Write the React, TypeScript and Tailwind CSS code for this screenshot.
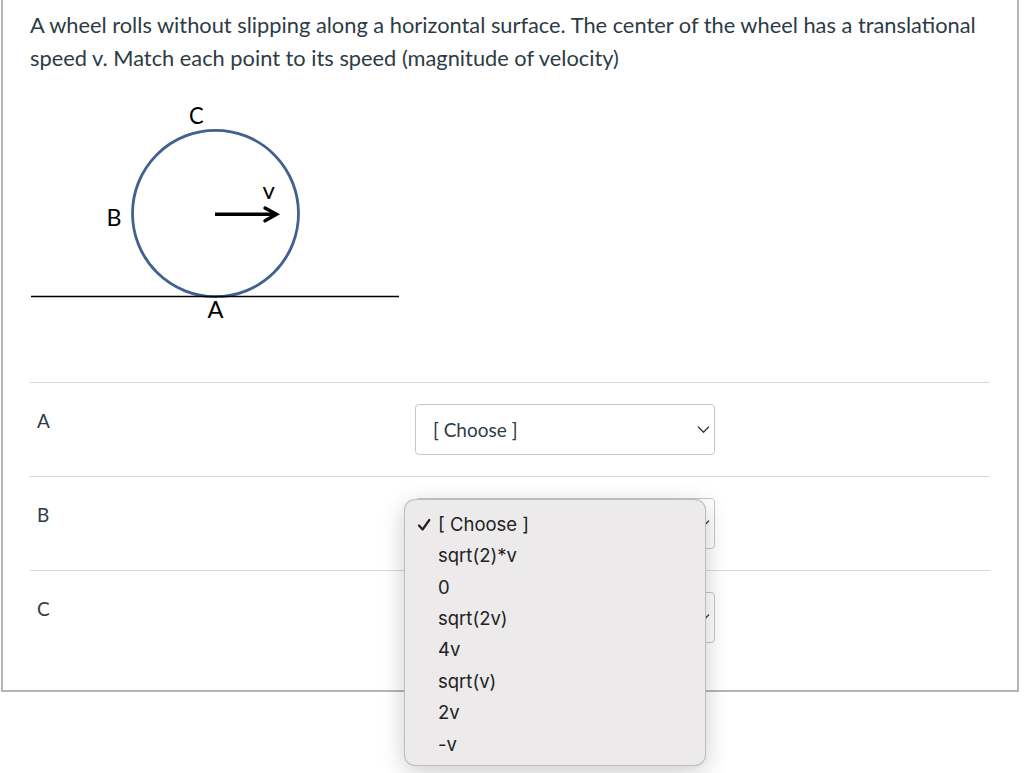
import React, { useState } from 'react';

const OPTIONS = ['[ Choose ]', 'sqrt(2)*v', '0', 'sqrt(2v)', '4v', 'sqrt(v)', '2v', '-v'];
const POINTS = ['A', 'B', 'C'];

function WheelDiagram() {
    return (
        <svg width="370" height="236" viewBox="0 0 370 236" className="block font-['Lato',sans-serif]">
            <ellipse cx="185.5" cy="123.5" rx="83" ry="83.2" fill="none" stroke="#43618f" strokeWidth="2.8" />
            <path d="M1 206.5H369" stroke="#000" strokeWidth="1.3" />
            <path d="M185 124.3H244" stroke="#000" strokeWidth="3.6" />
            <path d="M235 118L246.5 124.3L235 130.8" fill="none" stroke="#000" strokeWidth="3.4" strokeLinecap="round" />
            <g fontSize="24" fill="#000">
                <text x="159" y="34.3" textLength="14.7" lengthAdjust="spacingAndGlyphs">C</text>
                <text x="76.6" y="136" textLength="15" lengthAdjust="spacingAndGlyphs">B</text>
                <text x="177.5" y="228.3" textLength="16" lengthAdjust="spacingAndGlyphs">A</text>
                <text x="232.6" y="109.3" textLength="12.4" lengthAdjust="spacingAndGlyphs">v</text>
            </g>
        </svg>
    );
}

function App() {
    const [openPoint, setOpenPoint] = useState('B');
    const [answers, setAnswers] = useState<Record<string, string>>({});

    const handleSelect = (point: string, option: string) => {
        setAnswers({ ...answers, [point]: option });
        setOpenPoint('');
    };

    const renderMenu = (point: string) => (
        <ul className="absolute -left-[10px] top-[2px] z-10 h-[265px] w-[300px] rounded-[10px] bg-[#eceaeb] pt-[9px] font-['Inter',sans-serif] text-[18.5px] text-[#222] shadow-[0_0_0_1px_#bdbdbd,0_6px_24px_rgba(0,0,0,0.22)]">
            {OPTIONS.map((option) => (
                <li
                    key={option}
                    onClick={() => handleSelect(point, option)}
                    className="flex h-[31.4px] cursor-default items-center pl-[11px]"
                >
                    <span className="w-[22px]">
                        {option === (answers[point] || OPTIONS[0]) && (
                            <svg width="15" height="14" viewBox="0 0 15 14" fill="none" stroke="#222" strokeWidth="2.2" strokeLinecap="round" strokeLinejoin="round">
                                <path d="M3 7.5L6.6 11.5L13.3 2" />
                            </svg>
                        )}
                    </span>
                    {option}
                </li>
            ))}
        </ul>
    );

    return (
        <div className="h-[773px] overflow-hidden bg-white font-['Lato',sans-serif] text-[#2d3b45]">
            <div className="ml-px h-[692px] w-[1018px] border-2 border-t-0 border-[#b5b5b5] px-[27px] pt-[8px]">
                <p className="text-[21.82px] leading-[33px]">
                    A wheel rolls without slipping along a horizontal surface. The center of the wheel has a translational
                    speed v. Match each point to its speed (magnitude of velocity)
                </p>
                <div className="h-[308px] pt-[16px]">
                    <WheelDiagram />
                </div>
                {POINTS.map((point) => (
                    <div key={point} className="flex h-[94px] w-[960px] border-t border-[#d9d9d9] pt-[21px]">
                        <div className="w-[385px] pl-[7px] pt-[3px] text-[19px] leading-[28px]">{point}</div>
                        <div className="relative">
                            <button
                                onClick={() => setOpenPoint(openPoint === point ? '' : point)}
                                className="flex h-[51px] w-[300px] items-center justify-between rounded-[4px] border border-[#c4c7c9] bg-white pl-[17px] pr-[4px] text-[19px]"
                            >
                                <span className="pt-[2px]">{answers[point] || OPTIONS[0]}</span>
                                <svg width="13" height="9" viewBox="0 0 13 9" fill="none" stroke="#2d3b45" strokeWidth="1.3" strokeLinecap="round" strokeLinejoin="round">
                                    <path d="M1.4 2L6.5 7.2L11.6 2" />
                                </svg>
                            </button>
                            {openPoint === point && renderMenu(point)}
                        </div>
                    </div>
                ))}
            </div>
        </div>
    );
}

export default App;
